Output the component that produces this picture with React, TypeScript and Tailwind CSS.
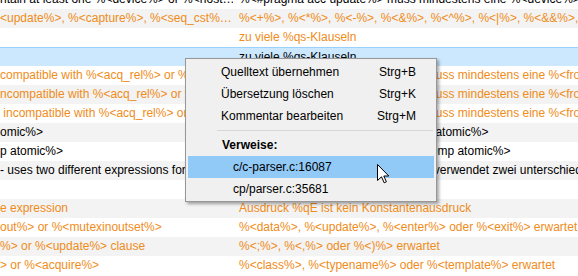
import React from "react";

type Row = {
  left: string;
  right: string;
  lc?: "o" | "k";
  rc?: "o" | "k";
  selected?: boolean;
};

const rows: Row[] = [
  { left: "ntain at least one %<device%> or %<host…", right: "%<#pragma acc update%> muss mindestens eine %<device%>-Klausel enthalten", lc: "k", rc: "k" },
  { left: "<update%>, %<capture%>, %<seq_cst%…", right: "%<+%>, %<*%>, %<-%>, %<&%>, %<^%>, %<|%>, %<&&%>, %<||%>", lc: "o", rc: "o" },
  { left: "", right: "zu viele %qs-Klauseln", rc: "o" },
  { left: "", right: "zu viele %qs-Klauseln", rc: "k", selected: true },
  { left: "compatible with %<acq_rel%> or %<release%>", right: "%<#pragma omp target update%> muss mindestens eine %<from%>- oder %<to%>-Klausel enthalten", lc: "o", rc: "o" },
  { left: "ncompatible with %<acq_rel%> or %<release%>", right: "%<#pragma omp target update%> muss mindestens eine %<from%>- oder %<to%>-Klausel enthalten", lc: "o", rc: "o" },
  { left: " incompatible with %<acq_rel%> or %<release%>", right: "%<#pragma omp target update%> muss mindestens eine %<from%>- oder %<to%>-Klausel enthalten", lc: "o", rc: "o" },
  { left: "omic%>", right: "%<hint%>-Klausel %<#pragma omp atomic%>", lc: "k", rc: "k" },
  { left: "p atomic%>", right: "%<seq_cst%>-Klausel %<#pragma omp atomic%>", lc: "k", rc: "k" },
  { left: "- uses two different expressions for memory", right: "%<#pragma omp atomic capture%> verwendet zwei unterschiedliche Ausdrücke für Speicher", lc: "k", rc: "k" },
  { left: "", right: "" },
  { left: "e expression", right: "Ausdruck %qE ist kein Konstantenausdruck", lc: "o", rc: "o" },
  { left: "out%> or %<mutexinoutset%>", right: "%<data%>, %<update%>, %<enter%> oder %<exit%> erwartet", lc: "o", rc: "o" },
  { left: "%> or %<update%> clause", right: "%<;%>, %<,%> oder %<)%> erwartet", lc: "o", rc: "o" },
  { left: "> or %<acquire%>", right: "%<class%>, %<typename%> oder %<template%> erwartet", lc: "o", rc: "o" },
];

function color(c?: "o" | "k") {
  return c === "o" ? "text-[#ef8c1a]" : "text-[#000000]";
}

function Cursor() {
  return (
    <svg width="13" height="20" viewBox="0 0 13 20" className="absolute left-[377px] top-[164px]">
      <path
        d="M0.5 0.5 V16.5 L4.5 12.8 L7.2 18.8 L9.4 17.8 L6.8 12 H11.8 Z"
        fill="#ffffff"
        stroke="#000000"
        strokeWidth="1"
        strokeLinejoin="miter"
      />
    </svg>
  );
}

export default function App() {
  return (
    <div
      className="relative w-[578px] h-[276px] overflow-hidden bg-white text-[12px] leading-[19px]"
      style={{ fontFamily: '"Liberation Sans", Arial, sans-serif' }}
    >
      <div className="-mt-[10px] flex flex-col">
        {rows.map((r, i) => (
          <div
            key={i}
            className={
              "flex h-[19px] box-border " +
              (r.selected
                ? "bg-[#cce8ff] border-t border-[#99d1ff]"
                : i % 2 === 1
                ? "bg-[#f3f3f3]"
                : "bg-white")
            }
          >
            <div className={"w-[233px] shrink-0 overflow-hidden whitespace-pre " + color(r.lc)}>
              {r.left}
            </div>
            <div className={"flex-1 pl-[6px] overflow-hidden whitespace-pre " + color(r.rc)}>
              {r.right}
            </div>
          </div>
        ))}
      </div>

      <div className="absolute left-[185px] top-[58px] w-[252px] h-[144px] border border-[#979797] bg-[#f0f0f0] shadow-[2px_2px_3px_rgba(0,0,0,0.35)] pt-[2px] px-[2px] text-black">
        <div className="flex h-[22px] items-center justify-between pl-[33px] pr-[18px]">
          <span>Quelltext übernehmen</span>
          <span>Strg+B</span>
        </div>
        <div className="flex h-[22px] items-center justify-between pl-[33px] pr-[18px]">
          <span>Übersetzung löschen</span>
          <span>Strg+K</span>
        </div>
        <div className="flex h-[22px] items-center justify-between pl-[33px] pr-[18px]">
          <span>Kommentar bearbeiten</span>
          <span>Strg+M</span>
        </div>
        <div className="ml-[29px] mr-[1px] my-[3px] h-px bg-[#d7d7d7]" />
        <div className="flex h-[22px] items-center pl-[34px] font-bold">Verweise:</div>
        <div className="flex h-[22px] items-center pl-[45px] bg-[#91c9f7]">c/c-parser.c:16087</div>
        <div className="flex h-[22px] items-center pl-[45px]">cp/parser.c:35681</div>
      </div>

      <Cursor />
    </div>
  );
}
